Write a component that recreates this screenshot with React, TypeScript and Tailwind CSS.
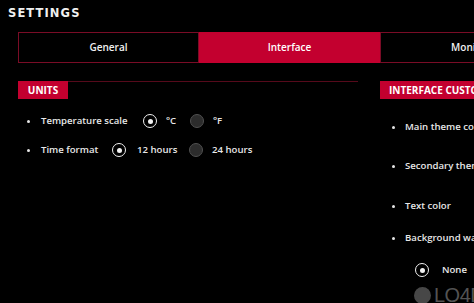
import React from 'react';

const CRIMSON = 'bg-[#c3002f]';

const Radio: React.FC<{ checked?: boolean }> = ({ checked }) =>
  checked ? (
    <span className="flex h-[14px] w-[14px] shrink-0 items-center justify-center rounded-full border-[1.5px] border-[#f2f2f2]">
      <span className="block h-[5px] w-[5px] rounded-full bg-[#f2f2f2]" />
    </span>
  ) : (
    <span className="block h-[14px] w-[14px] shrink-0 rounded-full border border-[#505050] bg-[#2c2c2c]" />
  );

const Bullet: React.FC<{ className?: string }> = ({ className }) => (
  <span className={`block h-[3px] w-[3px] shrink-0 rounded-full bg-[#e6e6e6] ${className ?? ''}`} />
);

const SectionLabel: React.FC<{ children: React.ReactNode; className?: string }> = ({ children, className }) => (
  <div
    className={`flex h-[18px] shrink-0 items-center ${CRIMSON} text-[10px] font-bold text-white ${className ?? ''}`}
  >
    {children}
  </div>
);

const tabs = ['General', 'Interface', 'Monitor'];

export default function App() {
  return (
    <div
      className="relative h-[303px] w-[474px] overflow-hidden bg-black text-[#e8e8e8]"
      style={{ fontFamily: '"Open Sans", "Noto Sans", sans-serif' }}
    >
      {/* title */}
      <div
        className="h-[32px] pl-[8px] pt-[6px] text-[11.5px] font-bold leading-[14px] tracking-[1.1px] text-[#f0f0f0]"
        style={{ fontFamily: '"DejaVu Sans", sans-serif' }}
      >
        SETTINGS
      </div>

      {/* tabs */}
      <div className="ml-[18px] flex w-max">
        {tabs.map((tab) => (
          <div
            key={tab}
            className={`flex h-[31px] w-[181px] items-center justify-center border text-[10px] font-semibold ${
              tab === 'Interface' ? `border-[#c3002f] ${CRIMSON} text-white` : 'border-[#7a0c26] text-[#f0f0f0]'
            }`}
          >
            {tab}
          </div>
        ))}
      </div>

      {/* sections */}
      <div className="mt-[18px] flex">
        {/* units */}
        <div className="ml-[18px] w-[340px] shrink-0">
          <div className="flex">
            <SectionLabel className="w-[50px] justify-center">UNITS</SectionLabel>
            <div className="h-px flex-1 bg-[#560a1b]" />
          </div>

          <div className="mt-[15px] flex h-[14px] items-center text-[9.6px] font-semibold">
            <Bullet className="ml-[9px]" />
            <span className="ml-[11px] w-[102px]">Temperature scale</span>
            <Radio checked />
            <span className="ml-[9px] w-[24px]">°C</span>
            <Radio />
            <span className="ml-[9px]">°F</span>
          </div>

          <div className="mt-[15px] flex h-[14px] items-center text-[9.6px] font-semibold">
            <Bullet className="ml-[9px]" />
            <span className="ml-[11px] w-[71px]">Time format</span>
            <Radio checked />
            <span className="ml-[11px] w-[52px]">12 hours</span>
            <Radio />
            <span className="ml-[9px]">24 hours</span>
          </div>
        </div>

        {/* interface customization */}
        <div className="ml-[22px] flex-1">
          <SectionLabel className="w-[120px] whitespace-nowrap pl-[9px]">INTERFACE CUSTOMIZATION</SectionLabel>

          <div className="flex flex-col text-[9.6px] font-semibold">
            <div className="mt-[21px] flex h-[14px] items-center whitespace-nowrap">
              <Bullet className="ml-[12px]" />
              <span className="ml-[10px]">Main theme color</span>
            </div>
            <div className="mt-[25px] flex h-[14px] items-center whitespace-nowrap">
              <Bullet className="ml-[12px]" />
              <span className="ml-[10px]">Secondary theme color</span>
            </div>
            <div className="mt-[26px] flex h-[14px] items-center whitespace-nowrap">
              <Bullet className="ml-[12px]" />
              <span className="ml-[10px]">Text color</span>
            </div>
            <div className="mt-[18px] flex h-[14px] items-center whitespace-nowrap">
              <Bullet className="ml-[12px]" />
              <span className="ml-[10px]">Background wallpaper</span>
            </div>
            <div className="mt-[18px] flex h-[14px] items-center whitespace-nowrap">
              <span className="ml-[35px]">
                <Radio checked />
              </span>
              <span className="ml-[13px]">None</span>
            </div>
          </div>
        </div>
      </div>

      {/* watermark */}
      <div
        className="absolute bottom-[-3px] left-[414px] flex items-center gap-[3px] text-[#8a8a8a] opacity-60"
        style={{ fontFamily: '"Liberation Sans", sans-serif' }}
      >
        <span className="block h-[17px] w-[17px] rounded-full bg-[#777]" />
        <span className="text-[20px] leading-[22px] tracking-[-0.5px]">LO4D</span>
        <span className="text-[11px] leading-[22px]">.com</span>
      </div>
    </div>
  );
}
